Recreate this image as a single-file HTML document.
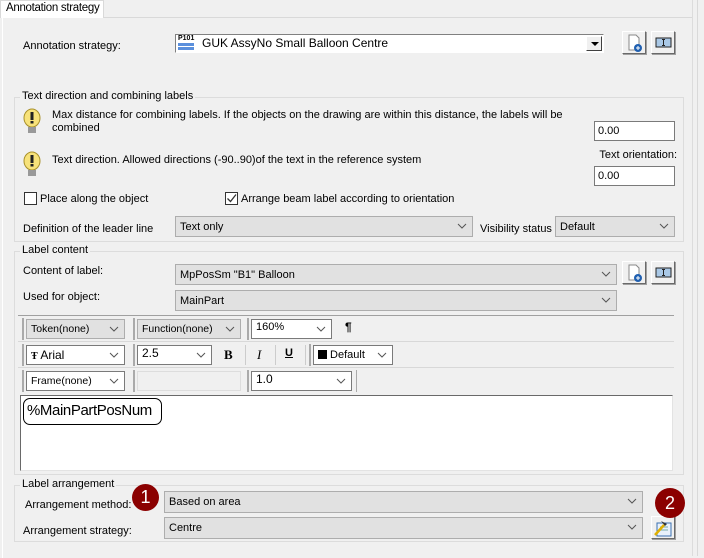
<!DOCTYPE html>
<html><head><meta charset="utf-8"><style>
*{box-sizing:border-box}
body{margin:0;width:704px;height:556px;background:#f0f0f0;font-family:"Liberation Sans",sans-serif;font-size:11px;color:#000;position:relative;overflow:hidden}
.a{position:absolute;white-space:nowrap}
.grp{position:absolute;border:1px solid #dcdcdc}
.gl{position:absolute;background:#f0f0f0;padding:0 2px;white-space:nowrap}
.cb{position:absolute;background:#e1e1e1;border:1px solid #adadad;padding:3px 4px;line-height:14px}
.cbw{position:absolute;background:#fff;border:1px solid #7a7a7a;padding:2px 4px;line-height:14px}
.chev{position:absolute;right:5px;top:4px;width:10px;height:10px}
.btn{position:absolute;width:24px;height:23px;background:#f0f0f0;border:1px solid;border-color:#fff #696969 #696969 #fff;box-shadow:1px 1px 0 #a0a0a0}
.circ{position:absolute;border-radius:50%;background:#8b0000;color:#fff;text-align:center;font-size:18px}
</style></head><body>
<div class="a" style="left:0;top:0;width:104px;height:18px;background:#fff;border:1px solid #d9d9d9;border-bottom:none;"></div>
<div class="a" style="left:6px;top:2px;font-size:11.5px;letter-spacing:-0.3px">Annotation strategy</div>
<div class="a" style="left:104px;top:17px;width:589px;height:1px;background:#d9d9d9"></div>
<div class="a" style="left:2px;top:18px;width:1px;height:540px;background:#fff"></div>
<div class="a" style="left:692px;top:0;width:1px;height:556px;background:#dcdcdc"></div>
<div class="a" style="left:697px;top:0;width:1px;height:556px;background:#d9d9d9"></div>

<div class="a" style="left:23px;top:40px">Annotation strategy:</div>
<div class="a" style="left:175px;top:34px;width:429px;height:19px;background:#fff;border:1px solid;border-color:#808080 #fff #fff #808080"></div>
<div class="a" style="left:178px;top:36px;width:16px;height:14px;">
 <div style="font-size:7px;line-height:6px;font-weight:bold">P101</div>
 <div style="height:3px;background:#5a8fdc;margin-top:1px"></div><div style="height:3px;background:#5a8fdc;margin-top:1px"></div>
</div>
<div class="a" style="left:202px;top:36px;font-size:12px">GUK AssyNo Small Balloon Centre</div>
<div class="a" style="left:586px;top:36px;width:16px;height:15px;border:1px solid;border-color:#fff #404040 #404040 #fff;background:#f0f0f0"><div style="position:absolute;left:4px;top:5px;border:4px solid transparent;border-top:4px solid #000;border-bottom:none"></div></div>
<div class="btn" style="left:622px;top:31px"><svg width="22" height="21"><path d="M6 3h7l3 3v12H6z" fill="#fff" stroke="#888"/><circle cx="15" cy="16" r="4" fill="#1f5fb0"/><path d="M13 16h4M15 14v4" stroke="#fff"/></svg></div>
<div class="btn" style="left:651px;top:31px"><svg width="22" height="21"><rect x="4" y="6" width="15" height="9" fill="#a9c8e6" stroke="#222"/><path d="M11.5 7.5v6M10 7.5h3M10 13.5h3" stroke="#222"/></svg></div>

<div class="grp" style="left:14px;top:97px;width:670px;height:145px"></div>
<div class="gl" style="left:20px;top:90px">Text direction and combining labels</div>
<svg class="a" style="left:22px;top:108px" width="20" height="28"><ellipse cx="10" cy="10" rx="8" ry="9" fill="#f7e27a" stroke="#a8902a"/><rect x="8.5" y="4" width="3" height="8" fill="#222"/><rect x="8.5" y="13" width="3" height="2.5" fill="#222"/><rect x="6" y="19" width="8" height="6" fill="#999"/></svg>
<div class="a" style="left:52px;top:109px;line-height:13px">Max distance for combining labels. If the objects on the drawing are within this distance, the labels will be<br>combined</div>
<div class="a" style="left:594px;top:121px;width:81px;height:20px;background:#fff;border:1px solid #7a7a7a;padding:3px 3px">0.00</div>
<svg class="a" style="left:22px;top:151px" width="20" height="28"><ellipse cx="10" cy="10" rx="8" ry="9" fill="#f7e27a" stroke="#a8902a"/><rect x="8.5" y="4" width="3" height="8" fill="#222"/><rect x="8.5" y="13" width="3" height="2.5" fill="#222"/><rect x="6" y="19" width="8" height="6" fill="#999"/></svg>
<div class="a" style="left:52px;top:154px">Text direction. Allowed directions (-90..90)of the text in the reference system</div>
<div class="a" style="right:27px;top:149px">Text orientation:</div>
<div class="a" style="left:594px;top:166px;width:81px;height:20px;background:#fff;border:1px solid #7a7a7a;padding:3px 3px">0.00</div>
<div class="a" style="left:24px;top:192px;width:13px;height:13px;background:#fff;border:1px solid #333"></div>
<div class="a" style="left:40px;top:193px">Place along the object</div>
<div class="a" style="left:225px;top:192px;width:13px;height:13px;background:#fff;border:1px solid #333"><svg width="11" height="11" style="position:absolute;left:0;top:0"><path d="M1.5 5.5l3 3 5.5-7" fill="none" stroke="#333" stroke-width="1.3"/></svg></div>
<div class="a" style="left:241px;top:193px">Arrange beam label according to orientation</div>
<div class="a" style="left:23px;top:223px">Definition of the leader line</div>
<div class="cb" style="left:175px;top:216px;width:298px;height:21px">Text only<svg class="chev"><path d="M1 3l4 4 4-4" fill="none" stroke="#555"/></svg></div>
<div class="a" style="left:480px;top:223px">Visibility status</div>
<div class="cb" style="left:555px;top:216px;width:120px;height:21px">Default<svg class="chev"><path d="M1 3l4 4 4-4" fill="none" stroke="#555"/></svg></div>

<div class="grp" style="left:14px;top:251px;width:670px;height:224px"></div>
<div class="gl" style="left:20px;top:244px">Label content</div>
<div class="a" style="left:23px;top:265px">Content of label:</div>
<div class="cb" style="left:175px;top:264px;width:442px;height:21px">MpPosSm "B1" Balloon<svg class="chev"><path d="M1 3l4 4 4-4" fill="none" stroke="#555"/></svg></div>
<div class="btn" style="left:622px;top:261px"><svg width="22" height="21"><path d="M6 3h7l3 3v12H6z" fill="#fff" stroke="#888"/><circle cx="15" cy="16" r="4" fill="#1f5fb0"/><path d="M13 16h4M15 14v4" stroke="#fff"/></svg></div>
<div class="btn" style="left:651px;top:261px"><svg width="22" height="21"><rect x="4" y="6" width="15" height="9" fill="#a9c8e6" stroke="#222"/><path d="M11.5 7.5v6M10 7.5h3M10 13.5h3" stroke="#222"/></svg></div>
<div class="a" style="left:23px;top:291px">Used for object:</div>
<div class="cb" style="left:175px;top:290px;width:442px;height:21px">MainPart<svg class="chev"><path d="M1 3l4 4 4-4" fill="none" stroke="#555"/></svg></div>

<div class="a" style="left:18px;top:315px;width:656px;height:1px;background:#a0a0a0"></div>
<div class="a" style="left:18px;top:341px;width:656px;height:1px;background:#d8d8d8"></div>
<div class="a" style="left:18px;top:367px;width:656px;height:1px;background:#d8d8d8"></div>
<div class="a" style="left:22px;top:318px;width:2px;height:22px;border-left:1px solid #aaa;border-right:1px solid #aaa"></div>
<div class="cb" style="left:26px;top:319px;width:99px;height:20px;font-size:10.5px;padding-top:2px">Token(none)<svg class="chev"><path d="M1 3l4 4 4-4" fill="none" stroke="#555"/></svg></div>
<div class="a" style="left:133px;top:318px;width:2px;height:22px;border-left:1px solid #aaa;border-right:1px solid #aaa"></div>
<div class="cb" style="left:137px;top:319px;width:104px;height:20px;font-size:10.5px;padding-top:2px">Function(none)<svg class="chev"><path d="M1 3l4 4 4-4" fill="none" stroke="#555"/></svg></div>
<div class="a" style="left:247px;top:318px;width:2px;height:22px;border-left:1px solid #aaa;border-right:1px solid #aaa"></div>
<div class="cbw" style="left:251px;top:319px;width:81px;height:20px;font-size:11px;padding-top:0">160%<svg class="chev"><path d="M1 3l4 4 4-4" fill="none" stroke="#555"/></svg></div>
<div class="a" style="left:345px;top:320px;font-weight:bold;font-size:12px">&#182;</div>
<div class="a" style="left:22px;top:344px;width:2px;height:22px;border-left:1px solid #aaa;border-right:1px solid #aaa"></div>
<div class="cbw" style="left:26px;top:345px;width:99px;height:20px;font-size:12px"><span style="font-family:'Liberation Serif',serif;font-weight:bold;font-size:10px">Ŧ</span> Arial<svg class="chev"><path d="M1 3l4 4 4-4" fill="none" stroke="#555"/></svg></div>
<div class="a" style="left:133px;top:344px;width:2px;height:22px;border-left:1px solid #aaa;border-right:1px solid #aaa"></div>
<div class="cbw" style="left:137px;top:345px;width:75px;height:20px;padding-top:0;font-size:12px">2.5<svg class="chev"><path d="M1 3l4 4 4-4" fill="none" stroke="#555"/></svg></div>
<div class="a" style="left:224px;top:347px;font-weight:bold;font-size:13px;font-family:'Liberation Serif',serif">B</div>
<div class="a" style="left:245px;top:345px;width:1px;height:20px;background:#ccc"></div>
<div class="a" style="left:257px;top:347px;font-style:italic;font-size:13px;font-family:'Liberation Serif',serif">I</div>
<div class="a" style="left:275px;top:345px;width:1px;height:20px;background:#ccc"></div>
<div class="a" style="left:285px;top:347px;font-weight:bold;text-decoration:underline">U</div>
<div class="a" style="left:305px;top:345px;width:1px;height:20px;background:#ccc"></div>
<div class="a" style="left:309px;top:344px;width:2px;height:22px;border-left:1px solid #aaa;border-right:1px solid #aaa"></div>
<div class="cbw" style="left:313px;top:345px;width:80px;height:20px;font-size:11px"><span style="display:inline-block;width:9px;height:9px;background:#000;vertical-align:-1px"></span> Default<svg class="chev"><path d="M1 3l4 4 4-4" fill="none" stroke="#555"/></svg></div>
<div class="a" style="left:22px;top:370px;width:2px;height:22px;border-left:1px solid #aaa;border-right:1px solid #aaa"></div>
<div class="cbw" style="left:26px;top:371px;width:99px;height:20px;font-size:10.5px">Frame(none)<svg class="chev"><path d="M1 3l4 4 4-4" fill="none" stroke="#555"/></svg></div>
<div class="a" style="left:133px;top:370px;width:2px;height:22px;border-left:1px solid #aaa;border-right:1px solid #aaa"></div>
<div class="a" style="left:137px;top:371px;width:104px;height:20px;border:1px solid #ddd;background:#f0f0f0"></div>
<div class="a" style="left:247px;top:370px;width:2px;height:22px;border-left:1px solid #aaa;border-right:1px solid #aaa"></div>
<div class="cbw" style="left:251px;top:371px;width:101px;height:20px;padding-top:0;font-size:12px">1.0<svg class="chev"><path d="M1 3l4 4 4-4" fill="none" stroke="#555"/></svg></div>
<div class="a" style="left:356px;top:370px;width:1px;height:22px;background:#aaa"></div>
<div class="a" style="left:20px;top:395px;width:653px;height:76px;background:#fff;border:1px solid;border-color:#696969 #e3e3e3 #e3e3e3 #696969"></div>
<div class="a" style="left:23px;top:398px;width:139px;height:27px;border:1px solid #000;border-radius:7px;font-size:15px;padding:3px 3px;letter-spacing:-0.4px">%MainPartPosNum</div>

<div class="grp" style="left:14px;top:485px;width:670px;height:57px"></div>
<div class="gl" style="left:20px;top:478px">Label arrangement</div>
<div class="a" style="left:25px;top:499px">Arrangement method:</div>
<div class="cb" style="left:164px;top:491px;width:479px;height:22px">Based on area<svg class="chev"><path d="M1 3l4 4 4-4" fill="none" stroke="#555"/></svg></div>
<div class="a" style="left:23px;top:525px">Arrangement strategy:</div>
<div class="cb" style="left:164px;top:517px;width:479px;height:22px">Centre<svg class="chev"><path d="M1 3l4 4 4-4" fill="none" stroke="#555"/></svg></div>
<div class="btn" style="left:651px;top:516px"><svg width="22" height="21"><rect x="5" y="6" width="14" height="13" fill="#e8f1fb" stroke="#3a6fb0"/><path d="M8 10h8M8 13h8" stroke="#7aa"/><path d="M3 18l9-10" stroke="#e0b000" stroke-width="2.5"/><path d="M9 4l6 3-2 2z" fill="#333"/></svg></div>
<div class="circ" style="left:132px;top:484px;width:27px;height:27px;line-height:27px">1</div>
<div class="circ" style="left:655px;top:488px;width:30px;height:30px;line-height:30px">2</div>
</body></html>
